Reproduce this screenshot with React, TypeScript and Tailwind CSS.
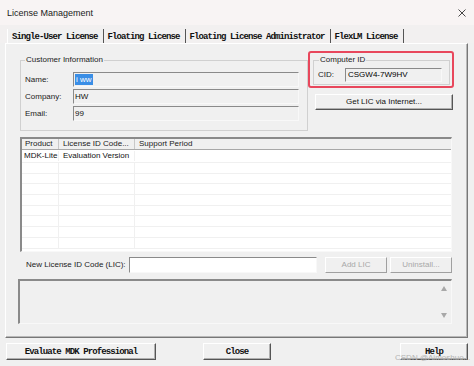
import React from 'react';

const mono = "font-['Liberation_Mono',monospace] text-[9px] tracking-[-0.9px] font-bold text-[#111]";
const sunken = 'border border-t-[#8a8a8a] border-l-[#8a8a8a] border-r-[#f8f8f8] border-b-[#f8f8f8]';
const raised = 'border border-t-white border-l-white border-r-[#555] border-b-[#555] shadow-[inset_-1px_-1px_0_#b0b0b0]';

function Field({ label, value, selected }: { label: string; value: string; selected?: boolean }) {
  return (
    <div className="flex items-center h-[15px]">
      <div className="w-[52px] pl-[4px] text-[#222]">{label}</div>
      <div className={`w-[226px] h-[15px] flex items-center pl-[1px] bg-[#f0f0f0] ${sunken}`}>
        {selected ? (
          <span className="bg-[#3a8ee6] text-white px-[1px] leading-[11px]">{value}</span>
        ) : (
          <span className="text-[#111]">{value}</span>
        )}
      </div>
    </div>
  );
}

const tabs = ['Single-User License', 'Floating License', 'Floating License Administrator', 'FlexLM License'];

export default function App() {
  return (
    <div className="w-[474px] h-[366px] bg-[#f0f0f0] flex flex-col overflow-hidden relative font-['Liberation_Sans',Arial,sans-serif] text-[8px] leading-[10px]">
      {/* Title bar */}
      <div className="h-[25px] flex items-center justify-between pl-[7px] pr-[8px] bg-[#f8f4f4]">
        <span className="text-[9px] text-[#1a1a1a]">License Management</span>
        <svg width="8" height="8" viewBox="0 0 8 8">
          <path d="M0.5 0.5 L7.5 7.5 M7.5 0.5 L0.5 7.5" stroke="#333" strokeWidth="0.9" />
        </svg>
      </div>

      {/* Tabs */}
      <div className="h-[18px] flex items-end pl-[7px] bg-[#f2f0f0]">
        {tabs.map((t, i) => (
          <div
            key={t}
            className={`flex items-center h-[15px] mb-[-1px] pl-[4px] pr-[5px] border-r border-r-[#555] ${i === 0 ? 'border-l border-l-white bg-[#f0f0f0]' : ''} ${mono}`}
          >
            {t}
          </div>
        ))}
      </div>

      {/* Tab panel */}
      <div className="ml-[5px] w-[463px] h-[295px] border border-t-white border-l-white border-r-[#777] border-b-[#777] shadow-[inset_-1px_-1px_0_#b8b8b8] pl-[14px] pt-[7px] flex flex-col">
        <div className="flex items-start h-[80px]">
          <fieldset className="mt-[4px] w-[288px] h-[76px] border border-[#d0d0d0] p-0 m-0">
            <legend className="ml-[4px] px-[1px] text-[#222] leading-[10px]">Customer Information</legend>
            <div className="pt-[7px] flex flex-col gap-[2px]">
              <Field label="Name:" value="i ww" selected />
              <Field label="Company:" value="HW" />
              <Field label="Email:" value="99" />
            </div>
          </fieldset>

          <div className="flex flex-col">
            <div className="w-[146px] h-[37px] border-2 border-[#e8475c] rounded-[3px] pl-[3px] pt-[2px]">
              <fieldset className="w-[137px] h-[30px] border border-[#d0d0d0] p-0 m-0">
                <legend className="ml-[5px] px-[1px] text-[#222] leading-[10px]">Computer ID</legend>
                <div className="pt-[3px] flex items-center">
                  <div className="w-[31px] pl-[4px] text-[#222]">CID:</div>
                  <div className={`w-[97px] h-[14px] flex items-center pl-[2px] bg-[#f0f0f0] ${sunken}`}>CSGW4-7W9HV</div>
                </div>
              </fieldset>
            </div>
            <div className={`mt-[6px] ml-[7px] w-[138px] h-[16px] flex items-center justify-center bg-[#f0f0f0] text-[#111] ${raised}`}>
              Get LIC via Internet...
            </div>
          </div>
        </div>

        {/* License list */}
        <div className={`mt-[6px] w-[432px] h-[115px] bg-white flex flex-col ${sunken} border-t-2 border-l-2`}>
          <div className="h-[11px] flex bg-[#f0f0f0] border-b border-[#a8a8a8] text-[#222]">
            <div className="w-[37px] pl-[3px] border-r border-[#c8c8c8]">Product</div>
            <div className="w-[76px] pl-[4px] border-r border-[#c8c8c8]">License ID Code...</div>
            <div className="flex-1 pl-[4px]">Support Period</div>
          </div>
          {Array.from({ length: 9 }).map((_, i) => (
            <div key={i} className={`flex border-b border-[#f0f0f0] ${i === 0 ? 'h-[13px] items-center' : 'h-[10.7px]'}`}>
              <div className="w-[37px] pl-[2px] border-r border-[#f0f0f0] text-[#111]">{i === 0 ? 'MDK-Lite' : ''}</div>
              <div className="w-[76px] pl-[4px] border-r border-[#f0f0f0] text-[#111]">{i === 0 ? 'Evaluation Version' : ''}</div>
              <div className="flex-1" />
            </div>
          ))}
        </div>

        {/* New LIC row */}
        <div className="mt-[5px] h-[16px] flex items-center">
          <div className="w-[109px] pl-[6px] text-[#222]">New License ID Code (LIC):</div>
          <div className={`w-[188px] h-[16px] bg-white ${sunken}`} />
          <div className={`ml-[8px] w-[62px] h-[16px] flex items-center justify-center text-[#a8a8a8] ${raised} border-r-[#a0a0a0] border-b-[#a0a0a0] shadow-none`}>Add LIC</div>
          <div className={`ml-[3px] w-[62px] h-[16px] flex items-center justify-center text-[#a8a8a8] ${raised} border-r-[#a0a0a0] border-b-[#a0a0a0] shadow-none`}>Uninstall...</div>
        </div>

        {/* Message box */}
        <div className={`mt-[6px] ml-[-2px] w-[434px] h-[45px] bg-[#f0f0f0] flex justify-end ${sunken} border-t-2 border-l-2`}>
          <div className="w-[14px] flex flex-col items-center justify-between py-[5px]">
            <svg width="6" height="5" viewBox="0 0 6 5"><path d="M3 0 L6 5 L0 5 Z" fill="#a8a8a8" /></svg>
            <svg width="6" height="5" viewBox="0 0 6 5"><path d="M0 0 L6 0 L3 5 Z" fill="#a8a8a8" /></svg>
          </div>
        </div>
      </div>

      {/* Bottom buttons */}
      <div className="mt-[5px] h-[17px] flex">
        <div className={`ml-[6px] w-[150px] h-[17px] flex items-center justify-center ${raised} ${mono}`}>Evaluate MDK Professional</div>
        <div className={`ml-[47px] w-[68px] h-[17px] flex items-center justify-center ${raised} ${mono}`}>Close</div>
        <div className={`ml-[129px] w-[68px] h-[17px] flex items-center justify-center ${raised} ${mono}`}>Help</div>
      </div>

      <div className="absolute left-[395px] top-[353px] text-[8px] leading-[9px] text-[#b4b4b4]">CSDN @Aimoshuo...</div>
    </div>
  );
}
